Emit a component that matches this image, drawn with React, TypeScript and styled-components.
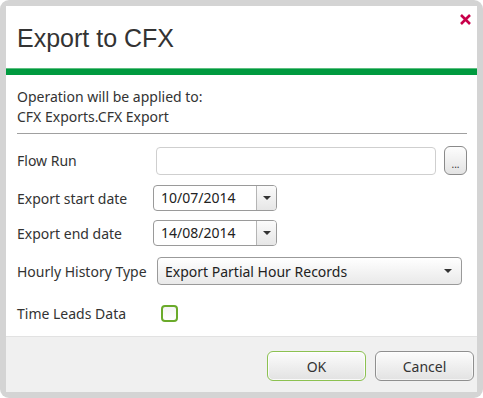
import * as React from "react"
import styled, { createGlobalStyle } from "styled-components"

const GlobalStyle = createGlobalStyle`
  html, body {
    margin: 0;
    padding: 0;
    background: #ffffff;
  }
  * {
    box-sizing: border-box;
  }
`

const uiFont = `"Noto Sans", "Open Sans", sans-serif`

const Frame = styled.div`
  width: 483px;
  height: 398px;
  padding: 6px;
  background: #d4d4d4;
  border-radius: 9px;
`

const Dialog = styled.div`
  height: 100%;
  display: flex;
  flex-direction: column;
  background: #ffffff;
`

const Header = styled.header`
  position: relative;
  height: 62px;
  padding: 18px 0 0 11px;
`

const Title = styled.h1`
  margin: 0;
  font-family: "Liberation Sans", Arial, sans-serif;
  font-weight: normal;
  font-size: 25px;
  color: #333333;
`

const CloseButton = styled.button`
  position: absolute;
  top: 6px;
  right: 5px;
  width: 14px;
  height: 14px;
  padding: 0;
  border: none;
  background: none;
  display: flex;
  align-items: center;
  justify-content: center;
`

const AccentBar = styled.div`
  height: 7px;
  background: #009a3f;
  border-top: 1px solid #5cbf7f;
`

const Body = styled.div`
  flex: 1;
  padding: 12px 10px 0 11px;
  font-family: ${uiFont};
  font-size: 14px;
  color: #333333;
`

const Intro = styled.div`
  line-height: 20px;
  padding-bottom: 6px;
  border-bottom: 1px solid #a0a0a0;
`

const Form = styled.div`
  display: flex;
  flex-direction: column;
  padding-top: 12px;
`

const Row = styled.div<{ $height: number; $gap: number }>`
  display: grid;
  grid-template-columns: 136px 1fr;
  align-items: center;
  height: ${(p) => p.$height}px;
  margin-bottom: ${(p) => p.$gap}px;
`

const Label = styled.span`
  white-space: nowrap;
`

const Field = styled.div<{ $indent: number }>`
  display: flex;
  align-items: center;
  gap: 8px;
  margin-left: ${(p) => p.$indent}px;
`

const TextInput = styled.div`
  width: 280px;
  height: 28px;
  border: 1px solid #cfcfcf;
  border-radius: 4px;
  background: #ffffff;
`

const EllipsisButton = styled.button`
  width: 23px;
  height: 29px;
  padding: 0 0 5px;
  border: 1px solid #8a8a8a;
  border-radius: 6px;
  background: linear-gradient(#fdfdfd, #e3e3e3);
  font-family: ${uiFont};
  font-size: 10px;
  line-height: 1;
  color: #333333;
  display: flex;
  align-items: flex-end;
  justify-content: center;
`

const DateBox = styled.div`
  width: 124px;
  height: 26px;
  display: flex;
  border: 1px solid #9a9a9a;
  border-radius: 4px;
  overflow: hidden;
  background: #ffffff;
`

const DateText = styled.span`
  flex: 1;
  padding-left: 7px;
  font-size: 14px;
  line-height: 24px;
  color: #222222;
`

const DateToggle = styled.span`
  width: 20px;
  border-left: 1px solid #b5b5b5;
  background: linear-gradient(#fbfbfb, #e6e6e6);
  display: flex;
  align-items: center;
  justify-content: center;
`

const Arrow = styled.span`
  width: 0;
  height: 0;
  border-left: 4px solid transparent;
  border-right: 4px solid transparent;
  border-top: 4px solid #333333;
`

const Select = styled.div`
  width: 305px;
  height: 28px;
  display: flex;
  align-items: center;
  justify-content: space-between;
  padding: 0 9px 0 7px;
  border: 1px solid #9a9a9a;
  border-radius: 4px;
  background: linear-gradient(#ffffff, #e9e9e9);
  font-size: 14px;
  color: #222222;
`

const Checkbox = styled.span`
  width: 17px;
  height: 17px;
  border: 2px solid #6aaa2a;
  border-radius: 4px;
  background: linear-gradient(#f4f4f4, #ffffff);
`

const Footer = styled.footer`
  height: 56px;
  display: flex;
  justify-content: flex-end;
  align-items: flex-start;
  gap: 9px;
  padding: 14px 3px 0 0;
  background: #f0f0f0;
  border-top: 1px solid #e2e2e2;
`

const FooterButton = styled.button<{ $primary?: boolean }>`
  width: 99px;
  height: 30px;
  border: 1px solid ${(p) => (p.$primary ? "#8cc151" : "#8f8f8f")};
  border-radius: 6px;
  background: linear-gradient(#fcfcfc, #e2e2e2);
  box-shadow: inset 0 0 0 1px ${(p) => (p.$primary ? "rgba(255,255,255,0.8)" : "rgba(255,255,255,0.6)")};
  font-family: ${uiFont};
  font-size: 14px;
  color: #333333;
`

export default function App() {
  return (
    <>
      <GlobalStyle />
      <Frame>
        <Dialog>
          <Header>
            <Title>Export to CFX</Title>
            <CloseButton aria-label="Close">
              <svg width="11" height="11" viewBox="0 0 11 11">
                <path d="M1 1 L10 10 M10 1 L1 10" stroke="#c8004a" strokeWidth="2.6" strokeLinecap="butt" />
              </svg>
            </CloseButton>
          </Header>
          <AccentBar />
          <Body>
            <Intro>
              <div>Operation will be applied to:</div>
              <div>CFX Exports.CFX Export</div>
            </Intro>
            <Form>
              <Row $height={29} $gap={10}>
                <Label>Flow Run</Label>
                <Field $indent={3}>
                  <TextInput />
                  <EllipsisButton>...</EllipsisButton>
                </Field>
              </Row>
              <Row $height={26} $gap={9}>
                <Label>Export start date</Label>
                <Field $indent={0}>
                  <DateBox>
                    <DateText>10/07/2014</DateText>
                    <DateToggle>
                      <Arrow />
                    </DateToggle>
                  </DateBox>
                </Field>
              </Row>
              <Row $height={26} $gap={11}>
                <Label>Export end date</Label>
                <Field $indent={0}>
                  <DateBox>
                    <DateText>14/08/2014</DateText>
                    <DateToggle>
                      <Arrow />
                    </DateToggle>
                  </DateBox>
                </Field>
              </Row>
              <Row $height={28} $gap={16}>
                <Label>Hourly History Type</Label>
                <Field $indent={4}>
                  <Select>
                    <span>Export Partial Hour Records</span>
                    <Arrow />
                  </Select>
                </Field>
              </Row>
              <Row $height={24} $gap={0}>
                <Label>Time Leads Data</Label>
                <Field $indent={8}>
                  <Checkbox />
                </Field>
              </Row>
            </Form>
          </Body>
          <Footer>
            <FooterButton $primary>OK</FooterButton>
            <FooterButton>Cancel</FooterButton>
          </Footer>
        </Dialog>
      </Frame>
    </>
  )
}
